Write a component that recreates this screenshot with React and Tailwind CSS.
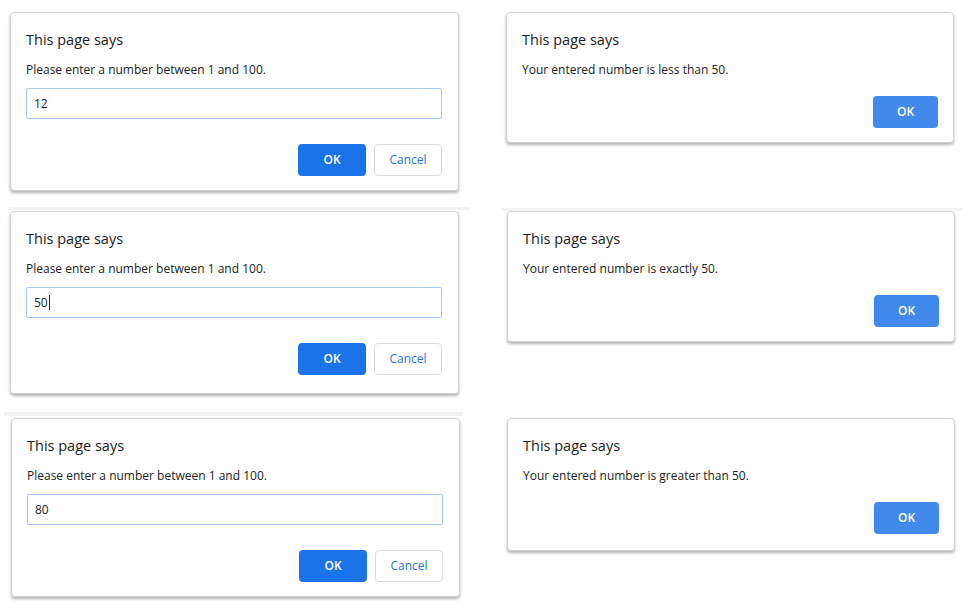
import React from "react";

const font = { fontFamily: '"Open Sans", "Noto Sans", "Liberation Sans", sans-serif' };

function PromptDialog({ value, caret, className }) {
  return (
    <div
      className={`flex w-[449px] flex-col rounded-[4px] border border-[#d3d3d3] bg-white pl-[15px] pr-[16px] pt-[17px] shadow-[0_2px_3px_rgba(0,0,0,0.3)] ${className}`}
    >
      <div className="text-[14.5px] leading-[20px] text-[#202124]">This page says</div>
      <div className="mt-[12px] text-[12px] leading-[16px] text-[#202124]">
        Please enter a number between 1 and 100.
      </div>
      <div className="mt-[10px] flex h-[31px] w-full items-center rounded-[2px] border border-[#a8c4f2] px-[7px] text-[12px] text-[#202124]">
        <span>{value}</span>
        {caret && <span className="ml-[1px] inline-block h-[15px] w-px bg-[#202124]" />}
      </div>
      <div className="mt-[25px] flex justify-end gap-2">
        <div className="flex h-[32px] w-[68px] items-center justify-center rounded-[4px] bg-[#1a73e8] text-[12px] font-semibold text-white">
          OK
        </div>
        <div className="flex h-[32px] w-[68px] items-center justify-center rounded-[4px] border border-[#dadce0] bg-white text-[12px] text-[#1a73e8]">
          Cancel
        </div>
      </div>
    </div>
  );
}

function AlertDialog({ message, className }) {
  return (
    <div
      className={`flex w-[448px] flex-col rounded-[4px] border border-[#d3d3d3] bg-white px-[15px] pt-[17px] shadow-[0_2px_3px_rgba(0,0,0,0.3)] ${className}`}
    >
      <div className="text-[14.5px] leading-[20px] text-[#202124]">This page says</div>
      <div className="mt-[12px] text-[12px] leading-[16px] text-[#202124]">{message}</div>
      <div className="mt-[18px] flex justify-end">
        <div className="flex h-[32px] w-[65px] items-center justify-center rounded-[4px] bg-[#4189ea] text-[12px] font-semibold text-white">
          OK
        </div>
      </div>
    </div>
  );
}

export default function App() {
  return (
    <div className="flex h-[614px] w-[974px] overflow-hidden bg-white" style={font}>
      <div className="flex w-[480px] flex-col">
        <PromptDialog value="12" className="ml-[10px] mt-[12px] h-[179px]" />
        <div className="ml-[9px] mt-[16px] h-[3px] w-[461px] bg-[#f1f3f4]" />
        <PromptDialog value="50" caret className="ml-[10px] mt-[1px] h-[183px]" />
        <div className="ml-[4px] mt-[18px] h-[4px] w-[459px] bg-[#f1f3f4]" />
        <PromptDialog value="80" className="ml-[11px] mt-[2px] h-[179px] w-[448px]" />
      </div>
      <div className="flex w-[494px] flex-col">
        <AlertDialog
          message="Your entered number is less than 50."
          className="ml-[26px] mt-[12px] h-[131px]"
        />
        <div className="ml-[21px] mt-[65px] h-[3px] w-[462px] bg-[#f1f3f4]" />
        <AlertDialog
          message="Your entered number is exactly 50."
          className="ml-[27px] mt-0 h-[131px]"
        />
        <AlertDialog
          message="Your entered number is greater than 50."
          className="ml-[27px] mt-[76px] h-[133px]"
        />
      </div>
    </div>
  );
}
